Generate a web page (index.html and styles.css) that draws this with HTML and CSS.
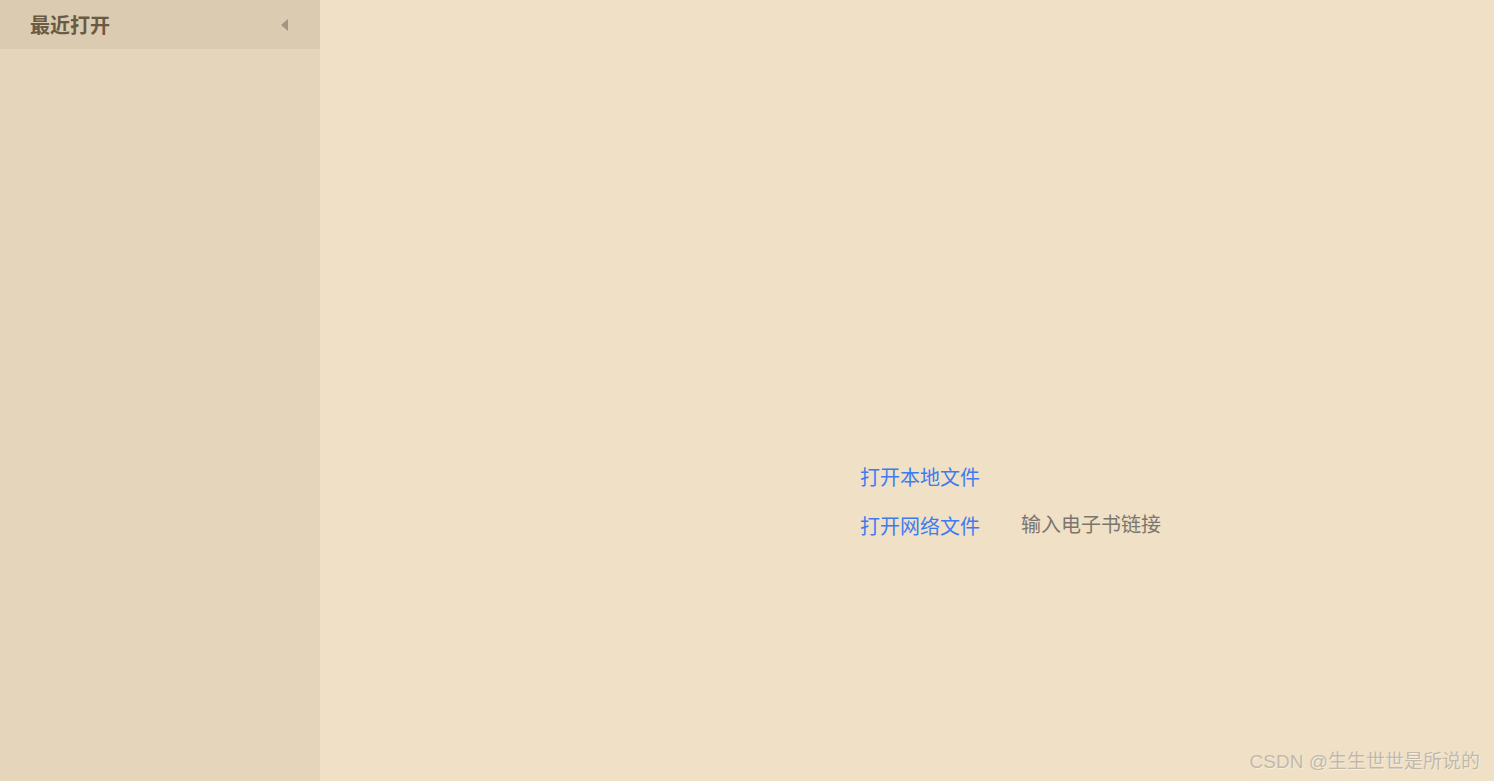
FILE: index.html
```html
<!DOCTYPE html>
<html lang="zh">
<head>
<meta charset="utf-8">
<title>阅读器</title>
<link rel="stylesheet" href="styles.css">
</head>
<body>
<div class="app">
  <aside class="sidebar">
    <div class="sidebar-head">
      <span class="sidebar-title">最近打开</span>
      <span class="collapse-arrow"></span>
    </div>
  </aside>
  <main class="main">
    <div class="actions">
      <div class="row">
        <a class="link" href="#">打开本地文件</a>
      </div>
      <div class="row">
        <a class="link" href="#">打开网络文件</a>
        <input class="url-input" type="text" placeholder="输入电子书链接">
      </div>
    </div>
  </main>
</div>
<div class="watermark">CSDN @生生世世是所说的</div>
</body>
</html>
```
FILE: styles.css
```css
html, body {
  margin: 0;
  padding: 0;
  height: 100%;
}
body {
  font-family: "Noto Sans CJK SC", "Noto Sans", sans-serif;
  background: #efe0c6;
  overflow: hidden;
}
.app {
  display: flex;
  height: 100vh;
}
.sidebar {
  width: 320px;
  flex: none;
  background: #e4d5bb;
  display: flex;
  flex-direction: column;
}
.sidebar-head {
  height: 49px;
  background: #dbcbb0;
  display: flex;
  align-items: center;
  justify-content: space-between;
  padding: 0 32px 0 30px;
  box-sizing: border-box;
}
.sidebar-title {
  font-size: 20px;
  font-weight: bold;
  color: #6b5a44;
  line-height: 1;
}
.collapse-arrow {
  width: 0;
  height: 0;
  border-top: 6px solid transparent;
  border-bottom: 6px solid transparent;
  border-right: 7px solid #a09683;
  margin-top: 1px;
}
.main {
  flex: 1;
  display: flex;
  flex-direction: column;
  padding: 462px 0 0 540px;
  box-sizing: border-box;
}
.actions {
  display: flex;
  flex-direction: column;
  gap: 19px;
}
.row {
  display: flex;
  align-items: center;
  height: 30px;
}
.link {
  font-size: 20px;
  line-height: 30px;
  color: #3f7bf0;
  text-decoration: none;
  width: 120px;
}
.url-input {
  margin-left: 41px;
  border: none;
  background: transparent;
  outline: none;
  padding: 0;
  font-family: inherit;
  font-size: 20px;
  line-height: 30px;
  height: 30px;
  width: 240px;
  margin-top: -4px;
  color: #555;
}
.url-input::placeholder {
  color: #7b766d;
}
.watermark {
  position: absolute;
  right: 14px;
  bottom: 6px;
  font-family: "Liberation Sans", "Noto Sans CJK SC", sans-serif;
  font-size: 19px;
  color: #c2b9ab;
  text-shadow: 1px 1px 0 rgba(255,255,255,0.45);
  line-height: 26px;
}
```
